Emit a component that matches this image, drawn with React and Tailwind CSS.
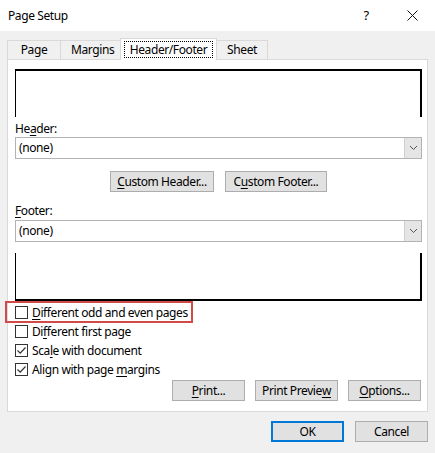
import React from 'react';

const U = ({ children }) => <span className="underline underline-offset-[2px] decoration-1">{children}</span>;

const Btn = ({ className = '', children }) => (
  <button
    type="button"
    className={`h-[21px] flex items-center justify-center border border-[#adadad] bg-[#e1e1e1] text-[#000] ${className}`}
  >
    {children}
  </button>
);

const Check = ({ checked, children }) => (
  <div className="h-[19px] flex items-center">
    <span className="w-[13px] h-[13px] border border-[#333] bg-white flex items-center justify-center">
      {checked && (
        <svg width="11" height="11" viewBox="0 0 11 11">
          <path d="M1.5 5.5 L4.2 8.2 L9.5 2.5" fill="none" stroke="#333" strokeWidth="1.2" />
        </svg>
      )}
    </span>
    <span className="ml-[4px]">{children}</span>
  </div>
);

const Select = () => (
  <div className="h-[22px] border border-[#b3b3b3] bg-white flex items-center justify-between">
    <span className="pl-[3px]">(none)</span>
    <span className="w-[17px] h-[20px] bg-[#e5e5e5] border-l border-[#cfcfcf] flex items-center justify-center">
      <svg width="9" height="6" viewBox="0 0 9 6">
        <path d="M1 1 L4.5 4.5 L8 1" fill="none" stroke="#555" strokeWidth="1" />
      </svg>
    </span>
  </div>
);

const Tab = ({ children }) => (
  <div className="h-[19px] px-[10px] flex items-center justify-center border border-b-0 border-[#d9d9d9] bg-[#f0f0f0] -ml-px first:ml-0">
    {children}
  </div>
);

export default function App() {
  return (
    <div
      className="w-[435px] h-[453px] bg-[#f0f0f0] text-[12px] tracking-[-0.4px] text-black flex flex-col overflow-hidden"
      style={{ fontFamily: '"Noto Sans", "Open Sans", sans-serif' }}
    >
      {/* title bar */}
      <div className="h-[31px] bg-white flex items-center justify-between pl-[8px]">
        <span className="text-[12px]">Page Setup</span>
        <div className="flex items-center">
          <span className="w-[46px] text-center text-[13px]">?</span>
          <span className="w-[46px] flex justify-center">
            <svg width="11" height="11" viewBox="0 0 11 11">
              <path d="M0.5 0.5 L10.5 10.5 M10.5 0.5 L0.5 10.5" stroke="#111" strokeWidth="1" />
            </svg>
          </span>
        </div>
      </div>

      {/* tabs */}
      <div className="mt-[7px] pl-[7px] h-[21px] flex items-end">
        <Tab><span className="w-[32px] text-center">Page</span></Tab>
        <Tab><span className="w-[39px] text-center">Margins</span></Tab>
        <div className="relative z-10 h-[22px] -mb-px -ml-px w-[97px] bg-white border border-b-0 border-[#d9d9d9] flex items-center justify-center">
          <span className="px-[5px] leading-[15px] border border-dotted border-black">Header/Footer</span>
        </div>
        <Tab><span className="w-[30px] text-center">Sheet</span></Tab>
      </div>

      {/* panel */}
      <div className="ml-[7px] w-[421px] h-[353px] bg-white border border-[#d9d9d9] pl-[7px] pr-[5px] flex flex-col">
        <div className="mt-[9px] h-[48px] border-t-2 border-l border-r-2 border-black" />
        <div className="mt-[4px] h-[16px] leading-[16px]">He<U>a</U>der:</div>
        <Select />
        <div className="mt-[12px] flex justify-center gap-[11px]">
          <Btn className="w-[104px]"><U>C</U>ustom Header...</Btn>
          <Btn className="w-[102px]">C<U>u</U>stom Footer...</Btn>
        </div>
        <div className="mt-[10px] h-[18px] leading-[18px]"><U>F</U>ooter:</div>
        <Select />
        <div className="mt-[11px] h-[48px] border-b-2 border-l border-r-2 border-black" />
        <div className="mt-[2px] relative">
          <span className="absolute left-[-10px] top-[-2px] w-[188px] h-[22px] border-2 border-[#d24a47] pointer-events-none" />
          <Check><U>D</U>ifferent odd and even pages</Check>
        </div>
        <Check>Di<U>f</U>ferent first page</Check>
        <Check checked>Sca<U>l</U>e with document</Check>
        <Check checked>Align with page <U>m</U>argins</Check>
        <div className="mt-[1px] flex justify-end gap-[10px] pr-[1px]">
          <Btn className="w-[73px]"><U>P</U>rint...</Btn>
          <Btn className="w-[83px]">Print Previe<U>w</U></Btn>
          <Btn className="w-[73px]"><U>O</U>ptions...</Btn>
        </div>
      </div>

      {/* dialog buttons */}
      <div className="mt-[9px] pr-[7px] flex justify-end gap-[11px]">
        <button type="button" className="w-[73px] h-[21px] border-2 border-[#0078d7] bg-[#e1e1e1] flex items-center justify-center">OK</button>
        <Btn className="w-[73px]">Cancel</Btn>
      </div>
    </div>
  );
}
